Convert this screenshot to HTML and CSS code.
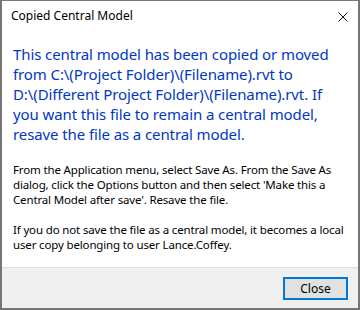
FILE: index.html
```html
<!DOCTYPE html>
<html lang="en">
<head>
    <meta charset="UTF-8">
    <title>Copied Central Model</title>
    <link rel="stylesheet" href="styles.css">
</head>
<body>
    <div class="dialog">
        <div class="titlebar">
            <span class="title">Copied Central Model</span>
            <svg class="close-x" width="10" height="10" viewBox="0 0 10 10"><path d="M0.5 0.5 L9.5 9.5 M9.5 0.5 L0.5 9.5" stroke="#111" stroke-width="1" fill="none"/></svg>
        </div>
        <div class="content">
            <p class="main">This central model has been copied or moved<br>from C:\(Project Folder)\(Filename).rvt to<br>D:\(Different Project Folder)\(Filename).rvt. If<br>you want this file to remain a central model,<br>resave the file as a central model.</p>
            <p class="info">From the Application menu, select Save As. From the Save As<br>dialog, click the Options button and then select 'Make this a<br>Central Model after save'. Resave the file.</p>
            <p class="info">If you do not save the file as a central model, it becomes a local<br>user copy belonging to user Lance.Coffey.</p>
        </div>
        <div class="footer">
            <button class="btn">Close</button>
        </div>
    </div>
</body>
</html>
```

FILE: styles.css
```css
/* task dialog */
*{box-sizing:border-box;}
body{margin:0; background:#fff; font-family:"Noto Sans", "Open Sans", sans-serif;}
.dialog{width:360px; height:310px; border:1px solid #767676; border-left-width:2px; border-right-width:2px; border-bottom-width:2px; display:flex; flex-direction:column; background:#fff;}
.titlebar{height:29px; display:flex; align-items:center; justify-content:space-between; padding:0 10px 0 9px; font-size:12px; color:#000;}
.close-x{margin-top:2px;}
.content{flex:1; padding:14px 11px 0 11px;}
.content p{margin:0; white-space:nowrap;}
.main{font-size:15px; line-height:20px; letter-spacing:-0.1px; color:#0037c6; margin-bottom:18px !important;}
.info{font-size:11.5px; line-height:15px; letter-spacing:-0.15px; color:#000; margin-bottom:15px !important;}
.footer{height:41px; background:#f0f0f0; border-top:1px solid #dfdfdf; display:flex; justify-content:flex-end; align-items:flex-start; padding:9px 10px 0 0;}
.btn{width:65px; height:23px; border:2px solid #0078d7; background:#e1e1e1; font-family:inherit; font-size:12px; color:#000; padding:0; outline:1px solid #e1e1e1; outline-offset:-3px;}
```
